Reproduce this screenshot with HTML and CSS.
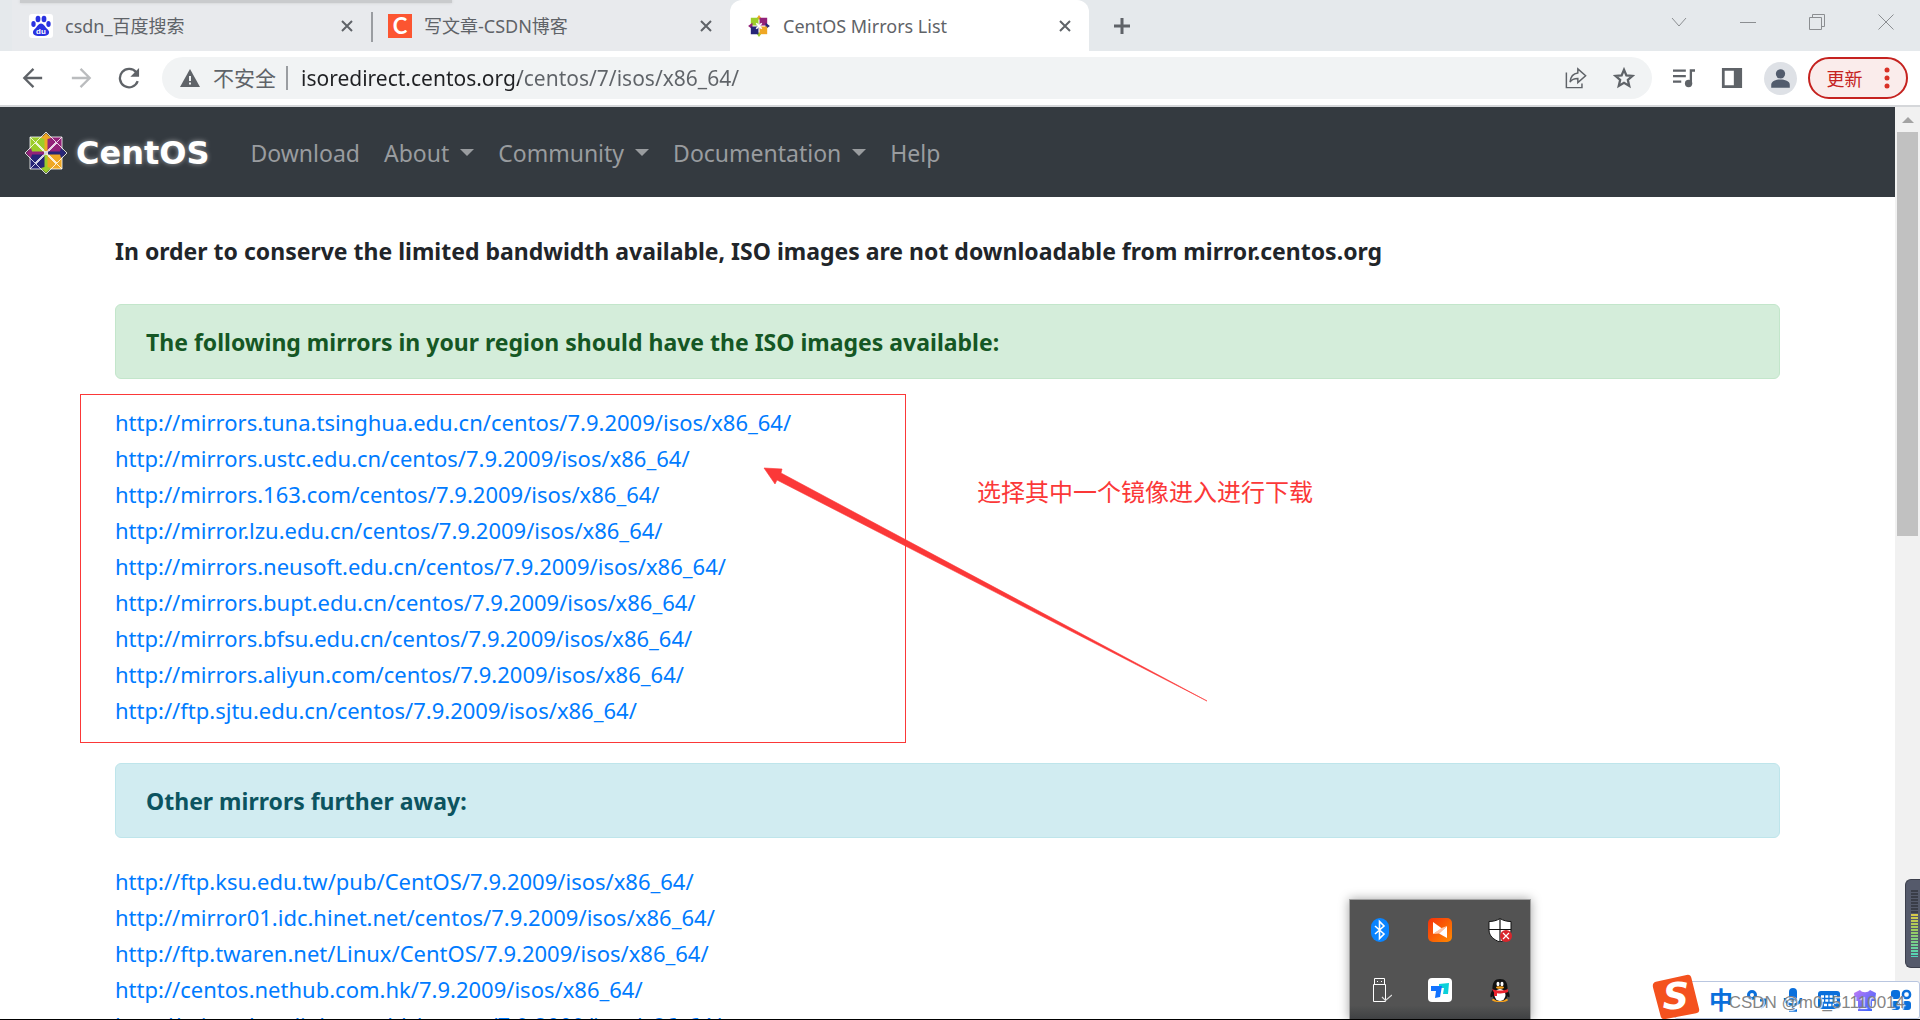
FILE: index.html
```html
<!DOCTYPE html>
<html lang="zh-CN">

<head>
    <meta charset="UTF-8">
    <meta name="viewport" content="width=device-width, initial-scale=1.0">
    <title>CentOS Mirrors List</title>
    <link rel="stylesheet" href="styles.css">
</head>

<body>
    <!-- 标签栏 -->
    <header class="tab-bar">
        <div class="top-shadow"></div>
        <div class="tab">
            <svg class="favicon" viewBox="0 0 24 24">
                <rect width="24" height="24" rx="3" fill="#fff"/>
                <g fill="#2932e1">
                    <ellipse cx="9" cy="5" rx="2.4" ry="3.2"/>
                    <ellipse cx="15" cy="5" rx="2.4" ry="3.2"/>
                    <ellipse cx="4.5" cy="10" rx="2.2" ry="3"/>
                    <ellipse cx="19.5" cy="10" rx="2.2" ry="3"/>
                    <path d="M12 9.5c2.500 0 3.500 2.500 5 4.200 1.500 1.600 3.500 2.800 3 5.300-.5 2.600-3.500 3-8 3s-7.500-.4-8-3c-.5-2.500 1.500-3.700 3-5.300 1.500-1.700 2.500-4.200 5-4.200z"/>
                </g>
                <text x="12" y="20" class="du">du</text>
            </svg>
            <span class="tab-title">csdn_百度搜索</span>
            <button class="tab-close" aria-label="关闭"><svg viewBox="0 0 14 14"><path d="M2 2l10 10M12 2L2 12"/></svg></button>
        </div>
        <div class="tab tab-divided">
            <span class="favicon csdn-icon">C</span>
            <span class="tab-title">写文章-CSDN博客</span>
            <button class="tab-close" aria-label="关闭"><svg viewBox="0 0 14 14"><path d="M2 2l10 10M12 2L2 12"/></svg></button>
        </div>
        <div class="tab tab-active">
            <svg class="favicon" viewBox="0 0 44 44">
                <path fill="#efa724" d="M22 2l6 8h-12z"/>
                <path fill="#9ccd2a" d="M7 7h14v14H7zM22 42l6-8h-12z"/>
                <path fill="#932279" d="M23 7h14v14H23zM2 22l8-6v12z"/>
                <path fill="#262577" d="M7 23h14v14H7zM42 22l-8-6v12z"/>
                <path fill="#efa724" d="M23 23h14v14H23z"/>
                <path d="M17 17l10 10M27 17L17 27" stroke="#fff" stroke-width="3"/>
            </svg>
            <span class="tab-title">CentOS Mirrors List</span>
            <button class="tab-close" aria-label="关闭"><svg viewBox="0 0 14 14"><path d="M2 2l10 10M12 2L2 12"/></svg></button>
        </div>
        <button class="new-tab" aria-label="新标签页"><svg viewBox="0 0 18 18"><path d="M9 1v16M1 9h16"/></svg></button>
        <div class="window-controls">
            <button aria-label="搜索标签页"><svg viewBox="0 0 16 16"><path d="M1 4l7 8 7-8"/></svg></button>
            <button aria-label="最小化"><svg viewBox="0 0 16 16"><path d="M0 8.500h16"/></svg></button>
            <button aria-label="还原"><svg viewBox="0 0 16 16"><path d="M.5 3.500h12v12H.5zM3.500 3.500v-3h12v12h-3"/></svg></button>
            <button aria-label="关闭窗口"><svg viewBox="0 0 16 16"><path d="M.5.5l15 15M15.500.5l-15 15"/></svg></button>
        </div>
    </header>

    <!-- 地址栏 -->
    <div class="toolbar">
        <button class="tool" aria-label="后退"><svg viewBox="0 0 24 24"><path d="M22 12H3M12.500 2L2.500 12l10 10"/></svg></button>
        <button class="tool tool-off" aria-label="前进"><svg viewBox="0 0 24 24"><path d="M2 12h19M11.500 2l10 10-10 10"/></svg></button>
        <button class="tool" aria-label="重新加载"><svg viewBox="0 0 24 24"><path d="M21.500 15.500A10 10 0 1 1 20 6"/><path class="fill" d="M23 1v9.500h-9.500z"/></svg></button>
        <div class="omnibox">
            <svg class="warn" viewBox="0 0 20 18"><path fill="#5f6368" d="M10 0l10 18H0z"/><path fill="#f1f3f4" d="M9 7h2v5H9zM9 13.500h2v2H9z"/></svg>
            <label class="insecure" for="url">不安全</label>
            <input class="url" id="url" type="text" value="isoredirect.centos.org/centos/7/isos/x86_64/">
            <button class="tool" aria-label="分享"><svg viewBox="0 0 24 24"><g stroke-width="1.600"><path d="M1.500 6v16.500h17V18"/><path d="M14 2l8.500 7.500L14 17v-4.500c-4 0-7 1.500-8.500 4C6 11 9 7 14 6.500z"/></g></svg></button>
            <button class="tool" aria-label="收藏"><svg viewBox="0 0 24 24"><path d="M12 3l2.600 6.100 6.600.6-5 4.400 1.500 6.500L12 17.200l-5.700 3.400 1.500-6.500-5-4.400 6.600-.6z"/></svg></button>
        </div>
        <button class="tool" aria-label="媒体"><svg viewBox="0 0 24 24"><path d="M0 4h14M0 10h14M0 16h9M24 3.800h-4.500V18"/><circle class="fill" cx="17" cy="18" r="4"/></svg></button>
        <button class="tool" aria-label="侧边栏"><svg viewBox="0 0 24 24"><path class="fill" d="M1 1h22v22H1zM4 4v16h10V4z" fill-rule="evenodd"/></svg></button>
        <button class="tool avatar" aria-label="个人资料"><svg viewBox="0 0 32 32"><circle cx="16" cy="11.500" r="4.500"/><path d="M7 25v-3c0-3.500 5-5 9-5s9 1.500 9 5v3z"/></svg></button>
        <button class="update">更新<svg viewBox="0 0 6 22"><circle cx="3" cy="3" r="2.500"/><circle cx="3" cy="11" r="2.500"/><circle cx="3" cy="19" r="2.500"/></svg></button>
    </div>

    <div class="viewport">
        <div class="page">
            <nav class="navbar">
                <a class="brand" href="#">
                    <svg viewBox="0 0 44 44">
                        <path fill="#9ccd2a" d="M6 6h15.500v15.500H6z"/>
                        <path fill="#932279" d="M22.500 6H38v15.500H22.500z"/>
                        <path fill="#262577" d="M6 22.500h15.500V38H6z"/>
                        <path fill="#efa724" d="M22.500 22.500H38V38H22.500z"/>
                        <g stroke="#fff" stroke-width=".8" fill="none">
                            <path d="M6 6h32v32H6zM6 6l32 32M38 6L6 38"/>
                            <path d="M22 1l10 10-10 10-10-10zM43 22L33 32 23 22l10-10zM22 43L12 33l10-10 10 10zM1 22l10-10 10 10-10 10z"/>
                        </g>
                        <path fill="#efa724" d="M22 2l5 5-3.500 1v12h-3V8L17 7z"/>
                        <path fill="#262577" d="M42 22l-5 5-1-3.500H24v-3h12l1-3.500z"/>
                        <path fill="#9ccd2a" d="M22 42l-5-5 3.500-1V24h3v12l3.500 1z"/>
                        <path fill="#932279" d="M2 22l5-5 1 3.500h12v3H8L7 27z"/>
                    </svg>
                    <span>CentOS</span>
                </a>
                <a class="nav-link" href="#">Download</a>
                <a class="nav-link dropdown" href="#">About</a>
                <a class="nav-link dropdown" href="#">Community</a>
                <a class="nav-link dropdown" href="#">Documentation</a>
                <a class="nav-link" href="#">Help</a>
            </nav>

            <main class="container">
                <h1 class="notice">In order to conserve the limited bandwidth available, ISO images are not downloadable from mirror.centos.org</h1>
                <h2 class="alert alert-success">The following mirrors in your region should have the ISO images available:</h2>
                <ul class="mirrors marked">
                    <li><a href="#">http://mirrors.tuna.tsinghua.edu.cn/centos/7.9.2009/isos/x86_64/</a></li>
                    <li><a href="#">http://mirrors.ustc.edu.cn/centos/7.9.2009/isos/x86_64/</a></li>
                    <li><a href="#">http://mirrors.163.com/centos/7.9.2009/isos/x86_64/</a></li>
                    <li><a href="#">http://mirror.lzu.edu.cn/centos/7.9.2009/isos/x86_64/</a></li>
                    <li><a href="#">http://mirrors.neusoft.edu.cn/centos/7.9.2009/isos/x86_64/</a></li>
                    <li><a href="#">http://mirrors.bupt.edu.cn/centos/7.9.2009/isos/x86_64/</a></li>
                    <li><a href="#">http://mirrors.bfsu.edu.cn/centos/7.9.2009/isos/x86_64/</a></li>
                    <li><a href="#">http://mirrors.aliyun.com/centos/7.9.2009/isos/x86_64/</a></li>
                    <li><a href="#">http://ftp.sjtu.edu.cn/centos/7.9.2009/isos/x86_64/</a></li>
                </ul>
                <h2 class="alert alert-info">Other mirrors further away:</h2>
                <ul class="mirrors">
                    <li><a href="#">http://ftp.ksu.edu.tw/pub/CentOS/7.9.2009/isos/x86_64/</a></li>
                    <li><a href="#">http://mirror01.idc.hinet.net/centos/7.9.2009/isos/x86_64/</a></li>
                    <li><a href="#">http://ftp.twaren.net/Linux/CentOS/7.9.2009/isos/x86_64/</a></li>
                    <li><a href="#">http://centos.nethub.com.hk/7.9.2009/isos/x86_64/</a></li>
                    <li><a href="#">http://mirror.hostlink.com.hk/centos/7.9.2009/isos/x86_64/</a></li>
                </ul>
            </main>
        </div>
        <div class="scrollbar">
            <div class="scroll-up"></div>
            <div class="scroll-thumb"></div>
        </div>
    </div>

    <!-- 标注 -->
    <svg class="arrow" viewBox="0 0 444 234"><path fill="#fb3838" stroke="#fb3838" stroke-width=".6" d="M0 0l18 1-1 4L443 233 13 12l-2 4z"/></svg>
    <p class="note">选择其中一个镜像进入进行下载</p>

    <!-- 系统托盘 -->
    <div class="tray">
        <svg viewBox="0 0 24 24"><rect x="3" width="18" height="24" rx="9" fill="#0a84ff"/><path d="M7 8l9 8-4.500 4.500v-17L16 8l-9 8" fill="none" stroke="#fff" stroke-width="1.600"/></svg>
        <svg viewBox="0 0 24 24">
            <defs><linearGradient id="fire" x2="1" y2="1"><stop stop-color="#f4300b"/><stop offset="1" stop-color="#ff8a00"/></linearGradient></defs>
            <rect width="24" height="24" rx="5" fill="url(#fire)"/>
            <path d="M5 4l9 6.500L5 16z" fill="#fff"/>
            <path d="M19 8v12l-8-4.500z" fill="#fff"/>
            <path d="M5 16l8.500-6 5.500-2-8 7.500z" fill="#ffc4a8"/>
        </svg>
        <svg viewBox="0 0 24 24"><path d="M12 .5c3 2 7 3 11 3V12c0 6-5 10-11 12C6 22 1 18 1 12V3.500c4 0 8-1 11-3z" fill="#fff" stroke="#111"/><path d="M12 1v23M1 11.500h22" stroke="#111" stroke-width="1.200"/><circle cx="18" cy="18" r="6" fill="#d9262c"/><path d="M15 15l6 6M21 15l-6 6" stroke="#fff" stroke-width="1.200"/></svg>
        <svg viewBox="0 0 24 24"><path d="M5.500 6.500h12v17h-12zM6.500 6.500v-6h10v6" fill="none" stroke="#fff"/><path d="M9 3h1v1H9zM13 3h1v1h-1z" fill="#fff"/><path d="M14 19l3.500 3.500L24 17" fill="none" stroke="#ddd" stroke-width="1.200"/></svg>
        <svg viewBox="0 0 24 24"><rect width="24" height="24" rx="4" fill="#fff"/><path d="M11 6l10-1-1 11h-5l1-6h-5z" fill="#0bd0d9"/><path d="M3 8h11l-2 11-5 1 1-7H3z" fill="#1272ff"/></svg>
        <svg viewBox="0 0 24 24"><ellipse cx="12" cy="22" rx="8" ry="2" fill="#f7a21b"/><path d="M4.500 12C4 4 7 1 12 1s8 3 7.500 11c1.500 2 2.500 5 2 7-1 1-2-1-2-1-1 4-4 5-7.500 5s-6.500-1-7.500-5c0 0-1 2-2 1-.5-2 .5-5 2-7z" fill="#111"/><ellipse cx="12" cy="17" rx="5.500" ry="6" fill="#fff"/><ellipse cx="10" cy="6" rx="1.500" ry="2.200" fill="#fff"/><ellipse cx="14" cy="6" rx="1.500" ry="2.200" fill="#fff"/><ellipse cx="12" cy="9.500" rx="4" ry="1.300" fill="#f7a21b"/><path d="M4 11c5 2 11 2 16 0v3c-4 1.500-7 1.700-11 1.200V18H6v-3.500z" fill="#e8222c"/></svg>
    </div>

    <div class="meter"></div>

    <!-- 输入法状态栏 -->
    <div class="ime">
        <svg class="sogou" viewBox="0 0 50 48"><path d="M4 8L36 1q4-1 5 3l8 32q1 4-3 5L14 47q-4 1-5-3L1 14q-1-5 3-6z" fill="#f4511e"/><text class="sogou-s" x="25" y="37">S</text></svg>
        <span class="ime-mode">中</span>
        <svg viewBox="0 0 24 24"><circle cx="7" cy="7" r="3.500" fill="none" stroke="#0a6fdc" stroke-width="3"/><path d="M15 12h5c0 4-1 6-4 7" fill="none" stroke="#0a6fdc" stroke-width="3"/></svg>
        <svg viewBox="0 0 24 24"><rect x="8" y="0" width="8" height="14" rx="4" fill="#0a6fdc"/><path d="M4 10c0 9 16 9 16 0M12 17v3M8 22.500h8" fill="none" stroke="#0a6fdc" stroke-width="2.500"/></svg>
        <svg viewBox="0 0 24 24"><rect x="1" y="3" width="22" height="18" rx="3" fill="#0a6fdc"/><path d="M4 8.500h16M4 12.500h16M7 17h10" stroke="#fff" stroke-width="2.500" stroke-dasharray="3 1.300"/></svg>
        <svg viewBox="0 0 24 24">
            <defs><linearGradient id="skin" x2="1" y2="1"><stop stop-color="#c07af5"/><stop offset="1" stop-color="#2c62ff"/></linearGradient></defs>
            <path d="M7 2c2 3 8 3 10 0l6 3-1 8h-3v10H5V13H2L1 5z" fill="url(#skin)"/>
        </svg>
        <svg viewBox="0 0 24 24"><g fill="#0a6fdc"><rect x="2" y="2" width="9" height="9" rx="3"/><rect x="2" y="13" width="9" height="9" rx="3"/><rect x="13" y="13" width="9" height="9" rx="3"/></g><rect x="14" y="3" width="7" height="7" rx="3" fill="none" stroke="#0a6fdc" stroke-width="2.500"/></svg>
    </div>
    <span class="watermark">CSDN @m0_51110014</span>
</body>

</html>
```
FILE: styles.css
```css
* {
    box-sizing: border-box;
}

body {
    margin: 0;
    height: 100vh;
    display: flex;
    flex-direction: column;
    position: relative;
    overflow: hidden;
    background-color: #fff;
    border-bottom: 1px solid #000;
    font-family: "Noto Sans", "Noto Sans CJK SC", sans-serif;
    color: #212529;
}

button {
    display: flex;
    align-items: center;
    justify-content: center;
    padding: 0;
    border: none;
    background: none;
    font-family: inherit;
}

a {
    text-decoration: none;
}

/* 标签栏 */
.tab-bar {
    display: flex;
    align-items: stretch;
    height: 51px;
    flex: none;
    padding-left: 12px;
    background-color: #e5e9ec;
}

.top-shadow {
    position: absolute;
    top: 0;
    left: 20px;
    width: 432px;
    height: 3px;
    background-color: #c9cbcd;
    box-shadow: 0 0 3px #c9cbcd;
}

.tab {
    display: flex;
    align-items: center;
    width: 359px;
    padding: 0 17px;
    gap: 12px;
    background-color: #e8eaed;
}

.tab-divided {
    background-image: linear-gradient(#9a9da1, #9a9da1);
    background-repeat: no-repeat;
    background-size: 2px 30px;
    background-position: 0 12px;
}

.tab-active {
    background: #fff;
    border-radius: 12px 12px 0 0;
}

.favicon {
    width: 24px;
    height: 24px;
    flex: none;
}

.du {
    font: bold 8px "Liberation Sans", sans-serif;
    fill: #fff;
    text-anchor: middle;
}

.csdn-icon {
    background-color: #fc5531;
    color: #fff;
    font: bold 22px/24px Lato, sans-serif;
    text-align: center;
}

.tab-title {
    flex: 1;
    font-size: 18px;
    line-height: 24px;
    color: #5f6368;
    white-space: nowrap;
}

.tab-close svg {
    width: 14px;
    height: 14px;
    stroke: #5f6368;
    stroke-width: 2;
}

.new-tab {
    width: 66px;
}

.new-tab svg {
    width: 18px;
    height: 18px;
    stroke: #5f6368;
    stroke-width: 3;
}

.window-controls {
    display: flex;
    margin-left: auto;
    padding-bottom: 8px;
}

.window-controls button {
    width: 69px;
}

.window-controls svg {
    width: 16px;
    height: 16px;
    fill: none;
    stroke: #8b8e91;
}

/* 地址栏 */
.toolbar {
    display: flex;
    align-items: center;
    height: 56px;
    flex: none;
    padding: 0 12px 0 9px;
    border-bottom: 2px solid #d5d7da;
}

.tool {
    width: 48px;
    height: 42px;
}

.tool svg {
    width: 22px;
    height: 22px;
    fill: none;
    stroke: #5f6368;
    stroke-width: 2.5;
}

.tool .fill {
    fill: #5f6368;
    stroke: none;
}

.tool-off svg {
    stroke: #babcbe;
}

.omnibox {
    flex: 1;
    display: flex;
    align-items: center;
    height: 42px;
    margin: 0 8px 0 9px;
    padding: 0 4px 0 18px;
    background-color: #f1f3f4;
    border-radius: 21px;
}

.warn {
    width: 20px;
    height: 18px;
}

.insecure {
    margin-left: 13px;
    padding-right: 10px;
    border-right: 2px solid #9a9da1;
    font-size: 21px;
    line-height: 24px;
    color: #5f6368;
}

.url {
    flex: 1;
    margin-left: 13px;
    padding: 0;
    border: none;
    outline: none;
    font-family: inherit;
    font-size: 21px;
    /* 域名深色，路径浅色 */
    background: linear-gradient(90deg, #202124 218px, #5f6368 218px);
    -webkit-background-clip: text;
    background-clip: text;
    -webkit-text-fill-color: transparent;
}

.avatar svg {
    width: 33px;
    height: 33px;
    border-radius: 50%;
    background-color: #dee1e6;
    fill: #525c6d;
    stroke: none;
}

.update {
    width: 100px;
    height: 42px;
    margin-left: 4px;
    gap: 21px;
    border: 2px solid #c5221f;
    border-radius: 21px;
    background-color: #faeceb;
    color: #c5221f;
    font-size: 18px;
}

.update svg {
    width: 6px;
    height: 22px;
    fill: #d93025;
}

/* 页面 */
.viewport {
    flex: 1;
    min-height: 0;
    display: flex;
}

.page {
    flex: 1;
    overflow: hidden;
}

.navbar {
    display: flex;
    align-items: center;
    height: 90px;
    padding: 2px 24px 0;
    background-color: #343a40;
}

.brand {
    display: flex;
    align-items: center;
    gap: 8px;
    margin-right: 29px;
    color: #fff;
    font: bold 32px/48px "DejaVu Sans", sans-serif;
    text-shadow: 0 0 5px rgba(255, 255, 255, .5);
}

.brand svg {
    width: 44px;
    height: 44px;
}

.nav-link {
    padding: 12px;
    font-size: 23px;
    line-height: 36px;
    color: #999c9f;
}

.dropdown::after {
    content: "";
    display: inline-block;
    margin-left: 11px;
    vertical-align: 6px;
    border-top: 7px solid;
    border-left: 7px solid transparent;
    border-right: 7px solid transparent;
}

.container {
    padding: 36px 115px 0;
}

.notice {
    margin: 0 0 35px;
    font-size: 23px;
    line-height: 36px;
    white-space: nowrap;
}

.alert {
    margin: 0 0 25px;
    padding: 19px 30px 17px;
    border: 1px solid;
    border-radius: 6px;
    font-size: 23px;
    line-height: 37px;
}

.alert-success {
    color: #155724;
    background-color: #d4edda;
    border-color: #c3e6cb;
}

.alert-info {
    color: #0c5460;
    background-color: #d1ecf1;
    border-color: #bee5eb;
}

.mirrors {
    margin: 0 0 35px;
    padding: 0;
    list-style: none;
    font-size: 22px;
    line-height: 36px;
}

.mirrors a {
    color: #007bff;
}

.marked {
    position: relative;
}

/* 红色标注框 */
.marked::before {
    content: "";
    position: absolute;
    inset: -10px auto -15px -35px;
    box-sizing: border-box;
    width: 826px;
    border: 1px solid #fb3838;
    pointer-events: none;
}

.scrollbar {
    width: 25px;
    padding: 0 2px;
    background-color: #f1f1f1;
}

.scroll-up {
    height: 25px;
    display: flex;
    align-items: center;
    justify-content: center;
}

.scroll-up::before {
    content: "";
    border-bottom: 6px solid #a3a3a3;
    border-left: 6px solid transparent;
    border-right: 6px solid transparent;
}

.scroll-thumb {
    height: 404px;
    background-color: #c1c1c1;
}

/* 标注 */
.arrow {
    position: absolute;
    left: 764px;
    top: 468px;
    width: 444px;
    height: 234px;
    overflow: visible;
}

.note {
    position: absolute;
    left: 977px;
    top: 474px;
    margin: 0;
    font-size: 24px;
    line-height: 36px;
    color: #fb3838;
}

/* 系统托盘 */
.tray {
    position: absolute;
    left: 1349px;
    bottom: -1px;
    display: grid;
    grid-template-columns: repeat(3, 60px);
    grid-template-rows: repeat(2, 60px);
    place-items: center;
    border: 1px solid #a0a0a0;
    border-bottom: none;
    background: linear-gradient(#535353 88%, #3e4042);
    box-shadow: 0 0 10px rgba(0, 0, 0, .35);
}

.tray svg {
    width: 24px;
    height: 24px;
}

.meter {
    position: absolute;
    right: 0;
    top: 879px;
    width: 15px;
    height: 89px;
    padding: 10px 2px 10px 5px;
    border: 1px solid #3c3f4c;
    border-right: none;
    border-radius: 6px 0 0 6px;
    background: repeating-linear-gradient(transparent 0 2px, #555a6b 2px 3px) content-box, linear-gradient(#3a3d48 35%, #d9c94a 36%, #9ccb5e 60%, #4fd6bd) content-box, #555a6b;
}

/* 输入法 */
.ime {
    position: absolute;
    right: 0;
    bottom: 0;
    display: flex;
    align-items: center;
    gap: 12px;
    height: 38px;
    padding: 0 6px 0 34px;
    border: 1px solid #b9c6e0;
    border-radius: 3px;
    background-color: #fff;
}

.ime svg,
.ime-mode {
    width: 24px;
    height: 24px;
}

.ime-mode {
    font-size: 24px;
    font-weight: bold;
    line-height: 24px;
    color: #0a6fdc;
}

.ime .sogou {
    position: absolute;
    left: -23px;
    bottom: -2px;
    width: 48px;
    height: 46px;
}

.sogou-s {
    font: bold italic 38px "DejaVu Sans", sans-serif;
    fill: #fff;
    text-anchor: middle;
}

.watermark {
    position: absolute;
    right: 15px;
    bottom: 4px;
    font: 17px/24px "Liberation Sans", sans-serif;
    color: rgba(125, 125, 125, .95);
    text-shadow: 1px 1px 1px #fff;
}
```
